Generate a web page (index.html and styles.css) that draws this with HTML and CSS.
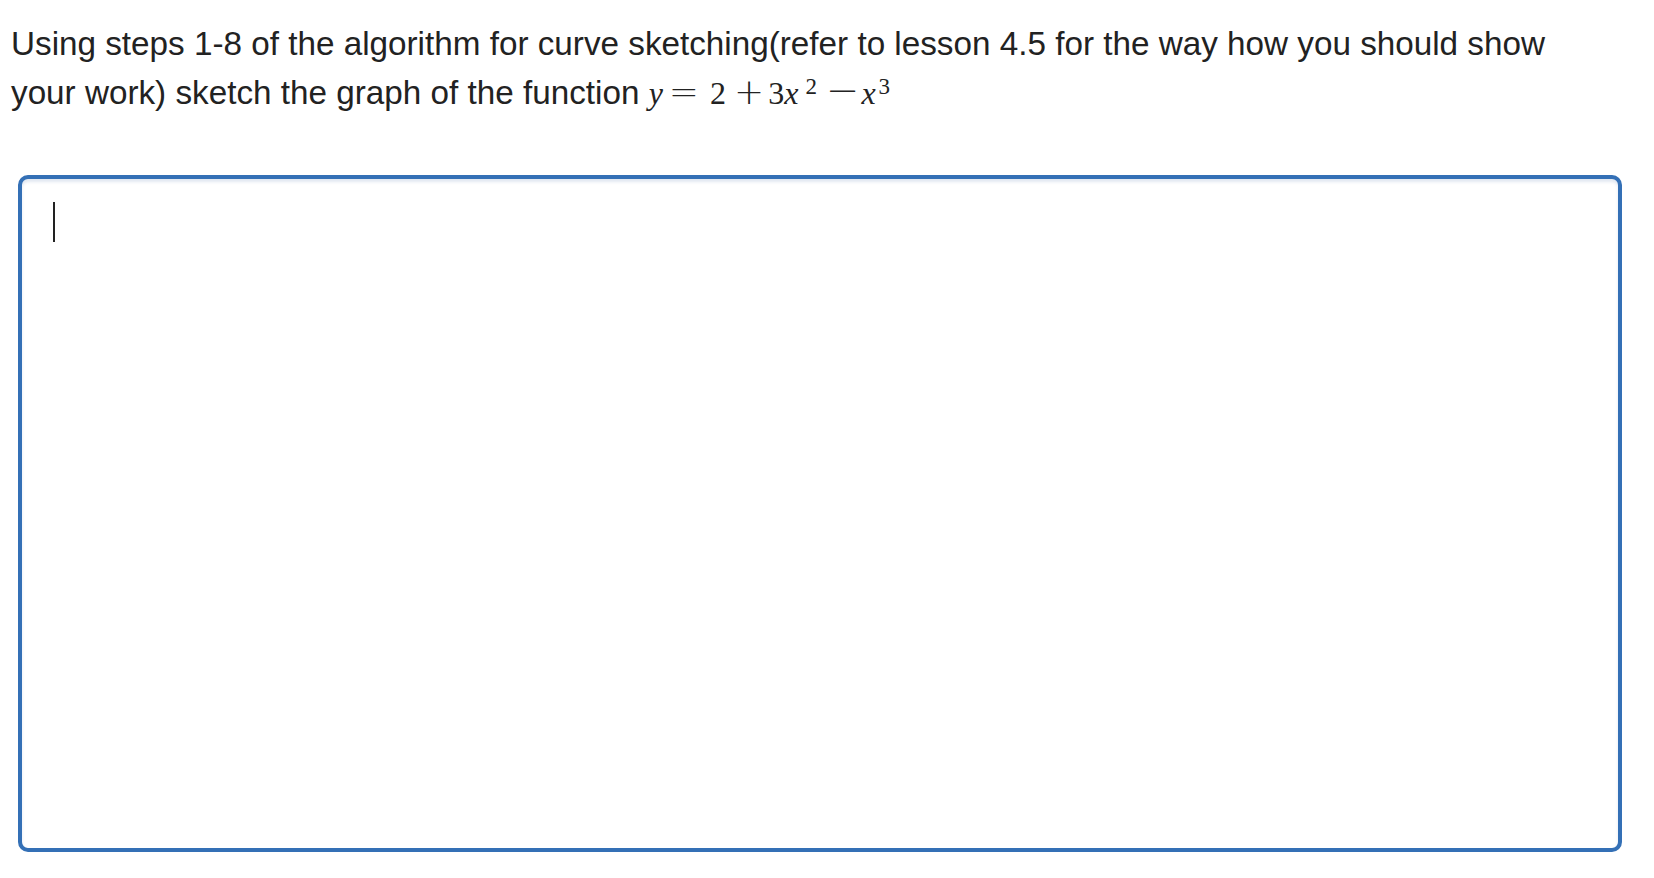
FILE: index.html
```html
<!DOCTYPE html>
<html lang="en">

<head>
  <meta charset="UTF-8">
  <link rel="stylesheet" href="styles.css">
</head>

<body>
  <div class="question">
    <p class="prompt">
      Using steps 1-8 of the algorithm for curve sketching(refer to lesson 4.5 for the way how you should show
      your work) sketch the graph of the function
      <span class="math"><i>y</i><span class="rel">=</span>2<span class="op">+</span>3<i>x</i><sup>2</sup><span class="op minus">&minus;</span><i>x</i><sup class="last">3</sup></span>
    </p>
    <!-- answer box -->
    <div class="answer">
      <span class="caret"></span>
    </div>
  </div>
</body>

</html>
```

FILE: styles.css
```css
body {
  margin: 0;
  background: #fff;
  font-family: "Liberation Sans", Arial, sans-serif;
  color: #222;
}

.question {
  padding: 19px 32px 0 11px;
}

.prompt {
  margin: 0;
  max-width: 1550px;
  font-size: 33.25px;
  line-height: 49px;
}

.math {
  font-family: "Liberation Serif", "Times New Roman", serif;
  font-size: 32px;
  white-space: nowrap;
}

.math i {
  font-style: italic;
}

.math .rel,
.math .op {
  font-family: "DejaVu Sans", sans-serif;
  font-weight: 200;
  font-size: 36px;
  line-height: 0;
}

.math .rel {
  margin: 0 11px 0 6px;
}

.math .op {
  margin: 0 4px 0 8px;
}

.math .minus {
  font-size: 40px;
  margin: 0 2px 0 9px;
}

.math sup {
  font-size: 23px;
  line-height: 0;
  margin-left: 7px;
  vertical-align: 10px;
}

.math sup.last {
  margin-left: 3px;
}

.answer {
  box-sizing: border-box;
  margin: 57px 0 0 7px;
  height: 677px;
  border: 4px solid #3470b6;
  border-radius: 10px;
  box-shadow: inset 0 3px 3px rgba(140, 165, 200, .25);
  padding: 23px 31px;
}

.caret {
  display: block;
  width: 2px;
  height: 40px;
  background: #222;
}
```
